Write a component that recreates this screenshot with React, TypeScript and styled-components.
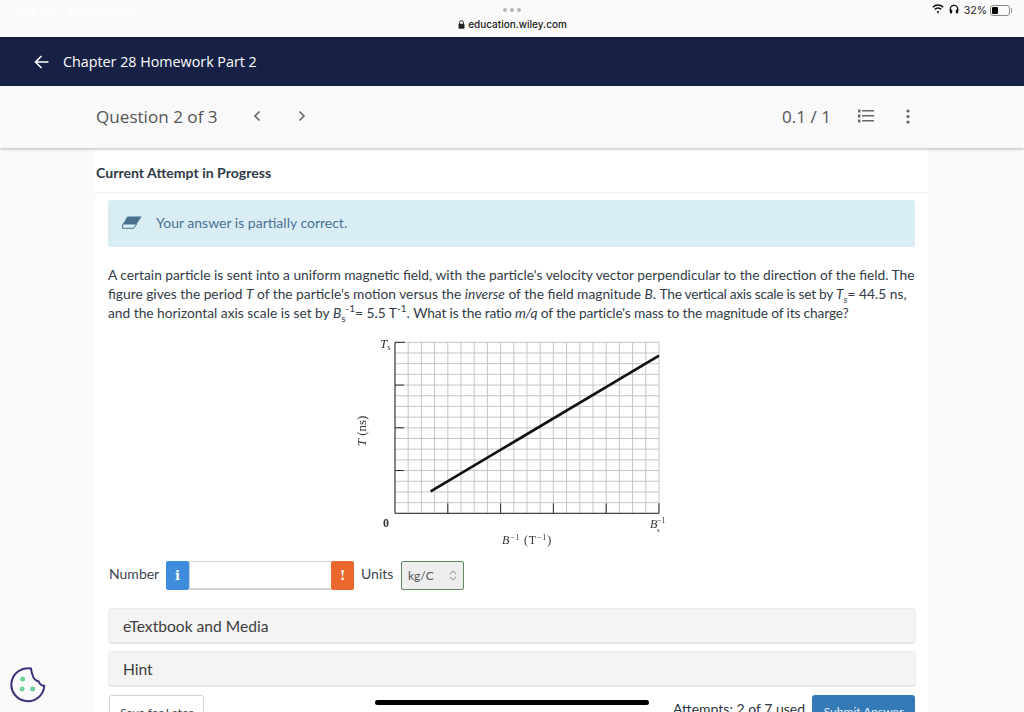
import * as React from 'react';
import styled, { createGlobalStyle } from 'styled-components';

const GlobalStyle = createGlobalStyle`
  html, body {
    margin: 0;
    padding: 0;
    height: 712px;
    overflow: hidden;
    background: #fafafa;
    font-family: 'Lato', 'Liberation Sans', sans-serif;
  }
  * { box-sizing: border-box; }
`;

const StatusBar = styled.div`
  height: 37px;
  display: grid;
  grid-template-columns: 1fr auto 1fr;
  padding: 0 14px 0 15px;
  background: #fafafa;
`;

const Clock = styled.div`
  font: 500 11px 'Inter', sans-serif;
  color: #ffffff;
  padding-top: 4px;
  word-spacing: 1px;
  white-space: pre;
`;

const UrlBox = styled.div`
  display: flex;
  flex-direction: column;
  align-items: center;
  padding-top: 8px;
`;

const UrlDots = styled.div`
  display: flex;
  gap: 3px;
  height: 10px;
  span {
    width: 4px;
    height: 4px;
    border-radius: 50%;
    background: #b4b4b4;
  }
`;

const UrlText = styled.div`
  display: flex;
  align-items: center;
  gap: 3px;
  font: 500 10px 'Inter', sans-serif;
  color: #1a1a1a;
`;

const StatusRight = styled.div`
  display: flex;
  justify-content: flex-end;
  align-items: flex-start;
  gap: 3px;
  padding-top: 4px;
  font: 400 10.5px 'Inter', sans-serif;
  color: #1a1a1a;
`;

const NavBar = styled.div`
  height: 49px;
  background: #172145;
  display: flex;
  align-items: center;
  gap: 14px;
  padding-left: 34px;
  color: #ffffff;
  font: 500 14.3px 'Open Sans', sans-serif;
`;

const QuestionBar = styled.div`
  position: relative;
  height: 62px;
  padding: 0 114px 2px 96px;
  background: #f9f9f9;
  box-shadow: 0 1px 3px rgba(0, 0, 0, 0.28);
  display: flex;
  align-items: center;
  color: #555555;
  font: 400 17.1px 'Open Sans', sans-serif;
`;

const QuestionTitle = styled.div`
  width: 152px;
`;

const Chevrons = styled.div`
  display: flex;
  gap: 37px;
  flex: 1;
  padding-left: 5px;
`;

const Score = styled.div`
  margin-right: 26px;
`;

const BarIcons = styled.div`
  display: flex;
  align-items: center;
  gap: 31px;
`;

const Panel = styled.main`
  width: 833px;
  margin-left: 95px;
  height: 564px;
  overflow: hidden;
  background: #ffffff;
`;

const PanelHeading = styled.h2`
  margin: 0;
  height: 45px;
  padding: 16px 0 0 1px;
  font: 700 14.1px/18px 'Lato', sans-serif;
  color: #2f3a47;
  border-bottom: 1px solid #eeeeee;
`;

const PanelBody = styled.div`
  padding: 7px 13px 0;
`;

const Alert = styled.div`
  height: 47px;
  display: flex;
  align-items: center;
  gap: 14px;
  padding: 0 0 2px 14px;
  background: #d9edf5;
  border-radius: 3px;
  color: #4a7196;
  font: 400 14px 'Lato', sans-serif;
`;

const Question = styled.p`
  margin: 18px 0 0;
  width: 808px;
  font: 400 13.75px/19px 'Lato', sans-serif;
  color: #333c47;
  sub, sup {
    font-size: 10px;
    line-height: 0;
  }
`;

const Tight = styled.span<{ $by: number }>`
  letter-spacing: ${(p) => p.$by}px;
`;

const Figure = styled.div`
  display: flex;
  justify-content: center;
  margin-top: 7px;
  height: 225px;
  padding-right: 3px;
  svg {
    filter: blur(0.35px);
  }
`;

const AnswerRow = styled.div`
  display: flex;
  align-items: flex-start;
  margin-top: 7px;
  height: 30px;
  font: 400 14px/26px 'Lato', sans-serif;
  color: #3a4552;
`;

const NumberLabel = styled.span`
  width: 57px;
  margin-left: 1px;
`;

const Addon = styled.div<{ $tone: string }>`
  width: 23px;
  height: 29px;
  display: flex;
  align-items: center;
  justify-content: center;
  background: ${(p) => p.$tone};
  border-radius: 2px;
  color: #ffffff;
  font: 700 13px 'DejaVu Serif', serif;
`;

const AnswerInput = styled.div`
  width: 142px;
  height: 29px;
  background: #ffffff;
  border: 2px solid #d2d2d2;
  border-width: 1px 0 2px 1px;
`;

const UnitsLabel = styled.span`
  margin-left: 7px;
  width: 40px;
`;

const UnitsSelect = styled.div`
  width: 63px;
  height: 29px;
  display: flex;
  align-items: center;
  justify-content: space-between;
  padding: 0 6px;
  background: #eeeeee;
  border: 1px solid #5f8a5f;
  border-radius: 2px;
  font: 400 12px 'Lato', sans-serif;
  color: #555555;
`;

const Accordion = styled.div<{ $first?: boolean }>`
  height: 36px;
  margin-top: ${(p) => (p.$first ? '17px' : '7px')};
  padding-left: 14px;
  display: flex;
  align-items: center;
  background: #f4f4f4;
  border: 1px solid #ececec;
  border-bottom: 2px solid #e6e6e6;
  border-radius: 4px;
  font: 400 15.6px 'Lato', sans-serif;
  color: #3d3d3d;
  width: 808px;
`;

const Footer = styled.div`
  display: flex;
  align-items: flex-start;
  margin-top: 8px;
  width: 807px;
`;

const SaveButton = styled.div`
  width: 95px;
  height: 34px;
  margin-left: 1px;
  padding-top: 9px;
  text-align: center;
  background: #ffffff;
  border: 1px solid #d4d4d4;
  border-radius: 3px;
  font: 400 12px 'Lato', sans-serif;
  color: #444444;
`;

const Attempts = styled.div`
  margin-left: auto;
  margin-right: 7px;
  padding-top: 5px;
  font: 400 14px 'Lato', sans-serif;
  color: #2d3440;
`;

const SubmitButton = styled.div`
  width: 103px;
  height: 34px;
  padding-top: 9px;
  text-align: center;
  background: #337ab7;
  border-radius: 3px;
  font: 400 12px 'Lato', sans-serif;
  color: #e8f0f8;
`;

const HomeIndicator = styled.div`
  position: fixed;
  left: 375px;
  top: 700px;
  width: 274px;
  height: 5px;
  border-radius: 3px;
  background: #000000;
`;

const CookieBadge = styled.div`
  position: fixed;
  left: 10px;
  top: 667px;
  width: 36px;
  height: 36px;
`;

const Battery = styled.div`
  position: relative;
  width: 20px;
  height: 11px;
  margin-top: 1px;
  border: 1px solid #8a8a8a;
  border-radius: 3px;
  padding: 1px;
  &::before {
    content: '';
    display: block;
    width: 6px;
    height: 7px;
    background: #000000;
    border-radius: 1px;
  }
  &::after {
    content: '';
    position: absolute;
    right: -3px;
    top: 2px;
    width: 1px;
    height: 5px;
    background: #9a9a9a;
  }
`;

const Chevron: React.FC<{ flip?: boolean }> = ({ flip }) => (
  <svg width="8" height="12" viewBox="0 0 8 12" fill="none" stroke="#666" strokeWidth="1.6">
    <path d={flip ? 'M1.5 1.5 6 6l-4.5 4.5' : 'M6.5 1.5 2 6l4.5 4.5'} />
  </svg>
);

// graph paper from the textbook figure, drawn on the crop's own coordinates
const Chart: React.FC = () => {
  const left = 55;
  const right = 319;
  const top = 13.3;
  const bottom = 184.3;
  const cols = Array.from({ length: 21 }, (_, i) => left + (i * (right - left)) / 20);
  const rows = Array.from({ length: 17 }, (_, i) => top + (i * (bottom - top)) / 16);
  const serif = "'Liberation Serif', serif";
  return (
    <svg width="340" height="225" viewBox="0 0 340 225">
      {cols.map((x) => (
        <line key={x} x1={x} x2={x} y1={top} y2={bottom} stroke="#c0c0c0" strokeWidth="0.9" />
      ))}
      {rows.map((y) => (
        <line key={y} x1={left} x2={right} y1={y} y2={y} stroke="#c0c0c0" strokeWidth="0.9" />
      ))}
      <path d={`M${left} ${top}V${bottom}H${right}`} fill="none" stroke="#2a2a2a" strokeWidth="1" />
      <line x1={left} x2={left + 10} y1={top} y2={top} stroke="#2a2a2a" strokeWidth="1" />
      {[1, 2, 3].map((i) => {
        const y = top + (i * (bottom - top)) / 4;
        return <line key={i} x1={left} x2={left + 9} y1={y} y2={y} stroke="#2a2a2a" strokeWidth="1" />;
      })}
      {[1, 2, 3, 4, 5].map((i) => {
        const x = left + (i * (right - left)) / 5;
        return <line key={i} x1={x} x2={x} y1={bottom} y2={bottom - 10} stroke="#2a2a2a" strokeWidth="1" />;
      })}
      <line x1="90.7" y1="162.3" x2="319" y2="26.7" stroke="#111" strokeWidth="2.7" />
      <text x="40" y="19" fontFamily={serif} fontStyle="italic" fontSize="13" fill="#333">
        T<tspan fontSize="8" dy="2" fontStyle="normal">s</tspan>
      </text>
      <text x="43" y="198" fontFamily={serif} fontWeight="700" fontSize="12" fill="#333">0</text>
      <text
        transform="translate(26 102) rotate(-90)"
        textAnchor="middle"
        fontFamily={serif}
        fontSize="13"
        fill="#333"
      >
        <tspan fontStyle="italic">T</tspan> (ns)
      </text>
      <text x="310" y="199" fontFamily={serif} fontStyle="italic" fontSize="12" fill="#333">B</text>
      <text x="317" y="194" fontFamily={serif} fontSize="8" fill="#333">−1</text>
      <text x="317" y="203" fontFamily={serif} fontSize="7" fill="#333">s</text>
      <text x="162" y="215" fontFamily={serif} fontSize="12" fill="#333" letterSpacing="0.8">
        <tspan fontStyle="italic">B</tspan>
        <tspan fontSize="8" dy="-4">−1</tspan>
        <tspan dy="4"> (T</tspan>
        <tspan fontSize="8" dy="-4">−1</tspan>
        <tspan dy="4">)</tspan>
      </text>
    </svg>
  );
};

const App: React.FC = () => {
  return (
    <>
      <GlobalStyle />
      <StatusBar>
        <Clock>7:16 PM   Mon Mar 20</Clock>
        <UrlBox>
          <UrlDots>
            <span />
            <span />
            <span />
          </UrlDots>
          <UrlText>
            <svg width="7" height="9" viewBox="0 0 7 9">
              <path d="M1.5 4V2.7a2 2 0 0 1 4 0V4" fill="none" stroke="#222" strokeWidth="1" />
              <rect x="0.5" y="3.8" width="6" height="5" rx="1" fill="#222" />
            </svg>
            education.wiley.com
          </UrlText>
        </UrlBox>
        <StatusRight>
          <svg width="12" height="10" viewBox="0 0 12 10" fill="none" stroke="#111" strokeWidth="1.5">
            <path d="M.8 3.2a7.4 7.4 0 0 1 10.4 0" />
            <path d="M2.8 5.4a4.6 4.6 0 0 1 6.4 0" />
            <path d="M6 9.4 4.6 7.6a2 2 0 0 1 2.8 0z" fill="#111" stroke="none" />
          </svg>
          <svg width="10" height="10" viewBox="0 0 10 10" fill="none" stroke="#111" strokeWidth="1.3" style={{ marginLeft: 2 }}>
            <path d="M1.3 7V5a3.7 3.7 0 0 1 7.4 0v2" />
            <rect x="0.8" y="5.6" width="2.4" height="3.8" rx="0.8" fill="#111" stroke="none" />
            <rect x="6.8" y="5.6" width="2.4" height="3.8" rx="0.8" fill="#111" stroke="none" />
          </svg>
          <span style={{ marginLeft: 2 }}>32%</span>
          <Battery />
        </StatusRight>
      </StatusBar>
      <NavBar>
        <svg width="15" height="14" viewBox="0 0 15 14" fill="none" stroke="#fff" strokeWidth="1.6">
          <path d="M14.5 7H1.5M7.5 1 1.5 7l6 6" />
        </svg>
        Chapter 28 Homework Part 2
      </NavBar>
      <QuestionBar>
        <QuestionTitle>Question 2 of 3</QuestionTitle>
        <Chevrons>
          <Chevron />
          <Chevron flip />
        </Chevrons>
        <Score>0.1 / 1</Score>
        <BarIcons>
          <svg width="18" height="14" viewBox="0 0 18 14" fill="#666">
            <rect x="5" y="1" width="12" height="1.5" />
            <rect x="5" y="6" width="12" height="1.5" />
            <rect x="5" y="11" width="12" height="1.5" />
            <rect x="1" y="0.5" width="2.4" height="3" />
            <rect x="1" y="5.5" width="2.4" height="3" />
            <rect x="1" y="10.5" width="2.4" height="3" />
          </svg>
          <svg width="4" height="15" viewBox="0 0 4 15" fill="#666">
            <circle cx="2" cy="2" r="1.6" />
            <circle cx="2" cy="7.5" r="1.6" />
            <circle cx="2" cy="13" r="1.6" />
          </svg>
        </BarIcons>
      </QuestionBar>
      <Panel>
        <PanelHeading>Current Attempt in Progress</PanelHeading>
        <PanelBody>
          <Alert>
            <svg width="20" height="13" viewBox="0 0 20 13">
              <path d="M5.5.6H19.6L14.6 8H.9z" fill="#48708f" />
              <path d="M.9 8h13.7l-2.8 4.3H.5z" fill="#d9edf5" stroke="#48708f" strokeWidth="1" />
            </svg>
            Your answer is partially correct.
          </Alert>
          <Question>
            A certain particle is sent into a uniform magnetic field, with the particle's velocity vector perpendicular to
            the direction of the field. The figure gives the period <i>T</i> of the particle's motion versus the{' '}
            <i>inverse</i> of the field magnitude <i>B</i>. <Tight $by={-0.27}>The vertical axis scale is set by </Tight>
            <i>T</i>
            <sub>
              <i>s</i>
            </sub>
            = 44.5 ns, and the horizontal axis scale is set by <i>B</i>
            <sub>s</sub>
            <sup>-1</sup>= 5.5 T<sup>-1</sup>.{' '}
            <Tight $by={-0.15}>
              What is the ratio <i>m/q</i> of the particle's mass to the magnitude of its charge?
            </Tight>
          </Question>
          <Figure>
            <Chart />
          </Figure>
          <AnswerRow>
            <NumberLabel>Number</NumberLabel>
            <Addon $tone="#3f8cdd">i</Addon>
            <AnswerInput />
            <Addon $tone="#ea672e">!</Addon>
            <UnitsLabel>Units</UnitsLabel>
            <UnitsSelect>
              kg/C
              <svg width="8" height="11" viewBox="0 0 8 11" fill="none" stroke="#aaa" strokeWidth="1.2">
                <path d="M1 4 4 1l3 3M1 7l3 3 3-3" />
              </svg>
            </UnitsSelect>
          </AnswerRow>
          <Accordion $first>eTextbook and Media</Accordion>
          <Accordion>Hint</Accordion>
          <Footer>
            <SaveButton>Save for Later</SaveButton>
            <Attempts>Attempts: 2 of 7 used</Attempts>
            <SubmitButton>Submit Answer</SubmitButton>
          </Footer>
        </PanelBody>
      </Panel>
      <HomeIndicator />
      <CookieBadge>
        <svg width="36" height="36" viewBox="0 0 36 36">
          <path
            d="M21 1.500A16.500 16.500 0 1 0 34.300 19C32 18.500 29.500 17.500 28.700 14.500 25.500 14 23 11 22.700 8 21.500 6.500 21.500 3.500 21 1.500z"
            fill="none"
            stroke="#37327a"
            strokeWidth="2"
          />
          <circle cx="12.600" cy="12" r="2.500" fill="#6fd39d" />
          <circle cx="12" cy="22" r="2.500" fill="#6fd39d" />
          <circle cx="22.600" cy="22" r="2.500" fill="#6fd39d" />
        </svg>
      </CookieBadge>
    </>
  );
};

export default App;
